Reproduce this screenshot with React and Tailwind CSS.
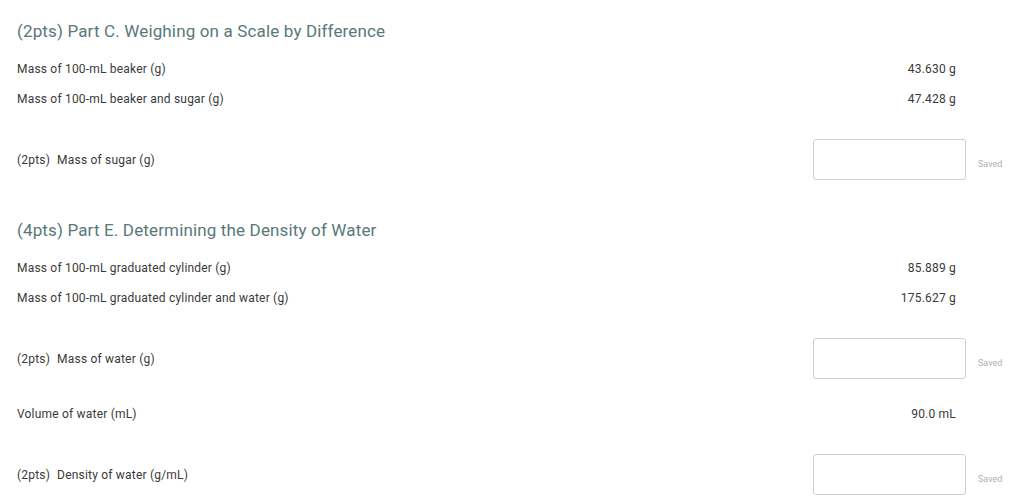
export default function App() {
  const font = { fontFamily: "Roboto, 'Liberation Sans', sans-serif" };

  const ValueRow = ({ label, value, className = "" }) => (
    <div className={`flex items-center h-[30px] tracking-[0.2px] ${className}`}>
      <div className="flex-1 pl-[17px] text-[12px] text-[#3a3a3a]">{label}</div>
      <div className="w-[153px] text-right pr-[10px] text-[12px] text-[#3a3a3a]">{value}</div>
      <div className="w-[58px]" />
    </div>
  );

  const InputRow = ({ pts, label, className = "" }) => (
    <div className={`flex items-center h-[41px] ${className}`}>
      <div className="flex-1 pl-[17px] text-[12px] tracking-[0.2px] text-[#3a3a3a]">
        <span className="mr-[7px]">{pts}</span>
        {label}
      </div>
      <input
        type="text"
        className="w-[153px] h-[41px] border border-[#cfcfcf] rounded-[3px] bg-white outline-none"
      />
      <div className="w-[58px] pl-[12px] pt-[10px] text-[9px] text-[#b0b0b0]">Saved</div>
    </div>
  );

  return (
    <div className="w-[1024px] h-[503px] bg-white overflow-hidden" style={font}>
      <h2 className="mt-[19px] pl-[17px] text-[17px] leading-[24px] tracking-[0.15px] text-[#58787a]">
        (2pts) Part C. Weighing on a Scale by Difference
      </h2>
      <ValueRow className="mt-[11px]" label="Mass of 100-mL beaker (g)" value="43.630 g" />
      <ValueRow label="Mass of 100-mL beaker and sugar (g)" value="47.428 g" />
      <InputRow className="mt-[25px]" pts="(2pts)" label="Mass of sugar (g)" />

      <h2 className="mt-[38px] pl-[17px] text-[17px] leading-[24px] tracking-[0.15px] text-[#58787a]">
        (4pts) Part E. Determining the Density of Water
      </h2>
      <ValueRow className="mt-[11px]" label="Mass of 100-mL graduated cylinder (g)" value="85.889 g" />
      <ValueRow label="Mass of 100-mL graduated cylinder and water (g)" value="175.627 g" />
      <InputRow className="mt-[25px]" pts="(2pts)" label="Mass of water (g)" />
      <ValueRow className="mt-[20px]" label="Volume of water (mL)" value="90.0 mL" />
      <InputRow className="mt-[25px]" pts="(2pts)" label="Density of water (g/mL)" />
    </div>
  );
}
